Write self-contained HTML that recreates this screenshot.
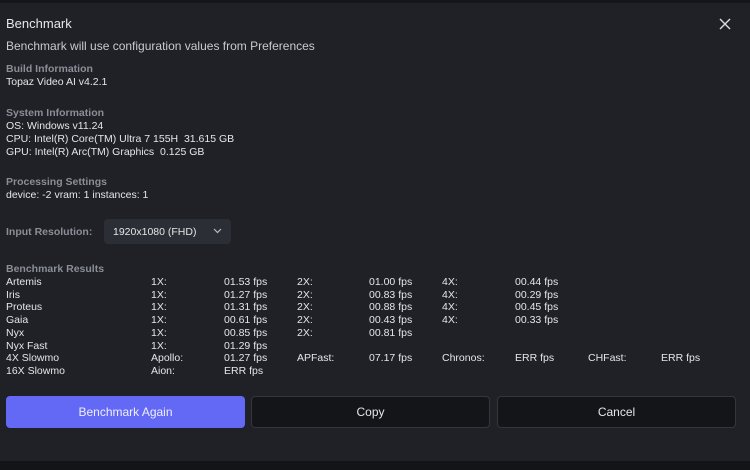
<!DOCTYPE html>
<html><head><style>
html,body{margin:0;padding:0;width:750px;height:470px;overflow:hidden;background:#1f2127;font-family:"Liberation Sans",sans-serif;color:#e6e6e8}
.a{position:absolute;white-space:nowrap}
.h{color:#8b8e96;font-weight:bold;font-size:10.5px}
.t{font-size:10.5px}
.btn{position:absolute;top:396px;height:32px;border-radius:4px;font-size:12px;display:flex;align-items:center;justify-content:center}
</style></head><body>
<div class="a" style="top:0;left:0;width:750px;height:3px;background:#15161a"></div>
<div class="a" style="left:6px;top:16px;font-size:13px">Benchmark</div>
<svg class="a" style="left:719px;top:18px" width="12" height="12"><path d="M1 1L11 11M11 1L1 11" stroke="#ddd" stroke-width="1.4"/></svg>
<div class="a" style="left:6px;top:39px;font-size:12px;color:#c8cad0">Benchmark will use configuration values from Preferences</div>
<div class="a h" style="left:6px;top:63px">Build Information</div>
<div class="a t" style="left:6px;top:76px">Topaz Video AI v4.2.1</div>
<div class="a h" style="left:6px;top:107px">System Information</div>
<div class="a t" style="left:6px;top:120px">OS: Windows v11.24</div>
<div class="a t" style="left:6px;top:133px">CPU: Intel(R) Core(TM) Ultra 7 155H&nbsp; 31.615 GB</div>
<div class="a t" style="left:6px;top:146px">GPU: Intel(R) Arc(TM) Graphics&nbsp; 0.125 GB</div>
<div class="a h" style="left:6px;top:176px">Processing Settings</div>
<div class="a t" style="left:6px;top:189px">device: -2 vram: 1 instances: 1</div>
<div class="a h" style="left:6px;top:226px">Input Resolution:</div>
<div class="a" style="left:104px;top:219px;width:127px;height:25px;background:#2c2e35;border-radius:4px"></div>
<div class="a t" style="left:113px;top:226px">1920x1080 (FHD)</div>
<svg class="a" style="left:213px;top:228px" width="9" height="6"><path d="M1 1L4.5 4.5L8 1" stroke="#bbb" fill="none" stroke-width="1.2"/></svg>
<div class="a h" style="left:6px;top:263px">Benchmark Results</div>
<div class="a t" style="left:0;top:276px;line-height:12.7px">
<div style="position:relative">
<div class="a" style="left:6px">Artemis<br>Iris<br>Proteus<br>Gaia<br>Nyx<br>Nyx Fast<br>4X Slowmo<br>16X Slowmo</div>
<div class="a" style="left:151px">1X:<br>1X:<br>1X:<br>1X:<br>1X:<br>1X:<br>Apollo:<br>Aion:</div>
<div class="a" style="left:224px">01.53 fps<br>01.27 fps<br>01.31 fps<br>00.61 fps<br>00.85 fps<br>01.29 fps<br>01.27 fps<br>ERR fps</div>
<div class="a" style="left:297px">2X:<br>2X:<br>2X:<br>2X:<br>2X:<br><br>APFast:</div>
<div class="a" style="left:369px">01.00 fps<br>00.83 fps<br>00.88 fps<br>00.43 fps<br>00.81 fps<br><br>07.17 fps</div>
<div class="a" style="left:442px">4X:<br>4X:<br>4X:<br>4X:<br><br><br>Chronos:</div>
<div class="a" style="left:515px">00.44 fps<br>00.29 fps<br>00.45 fps<br>00.33 fps<br><br><br>ERR fps</div>
<div class="a" style="left:588px"><br><br><br><br><br><br>CHFast:</div>
<div class="a" style="left:661px"><br><br><br><br><br><br>ERR fps</div>
</div></div>
<div class="btn" style="left:6px;width:239px;background:#6469f5;color:#eef">Benchmark Again</div>
<div class="btn" style="left:251px;width:239px;background:#141519;border:1px solid #34363d;box-sizing:border-box">Copy</div>
<div class="btn" style="left:497px;width:239px;background:#141519;border:1px solid #34363d;box-sizing:border-box">Cancel</div>
<div class="a" style="top:461px;left:0;width:750px;height:9px;background:#131418"></div>
</body></html>
